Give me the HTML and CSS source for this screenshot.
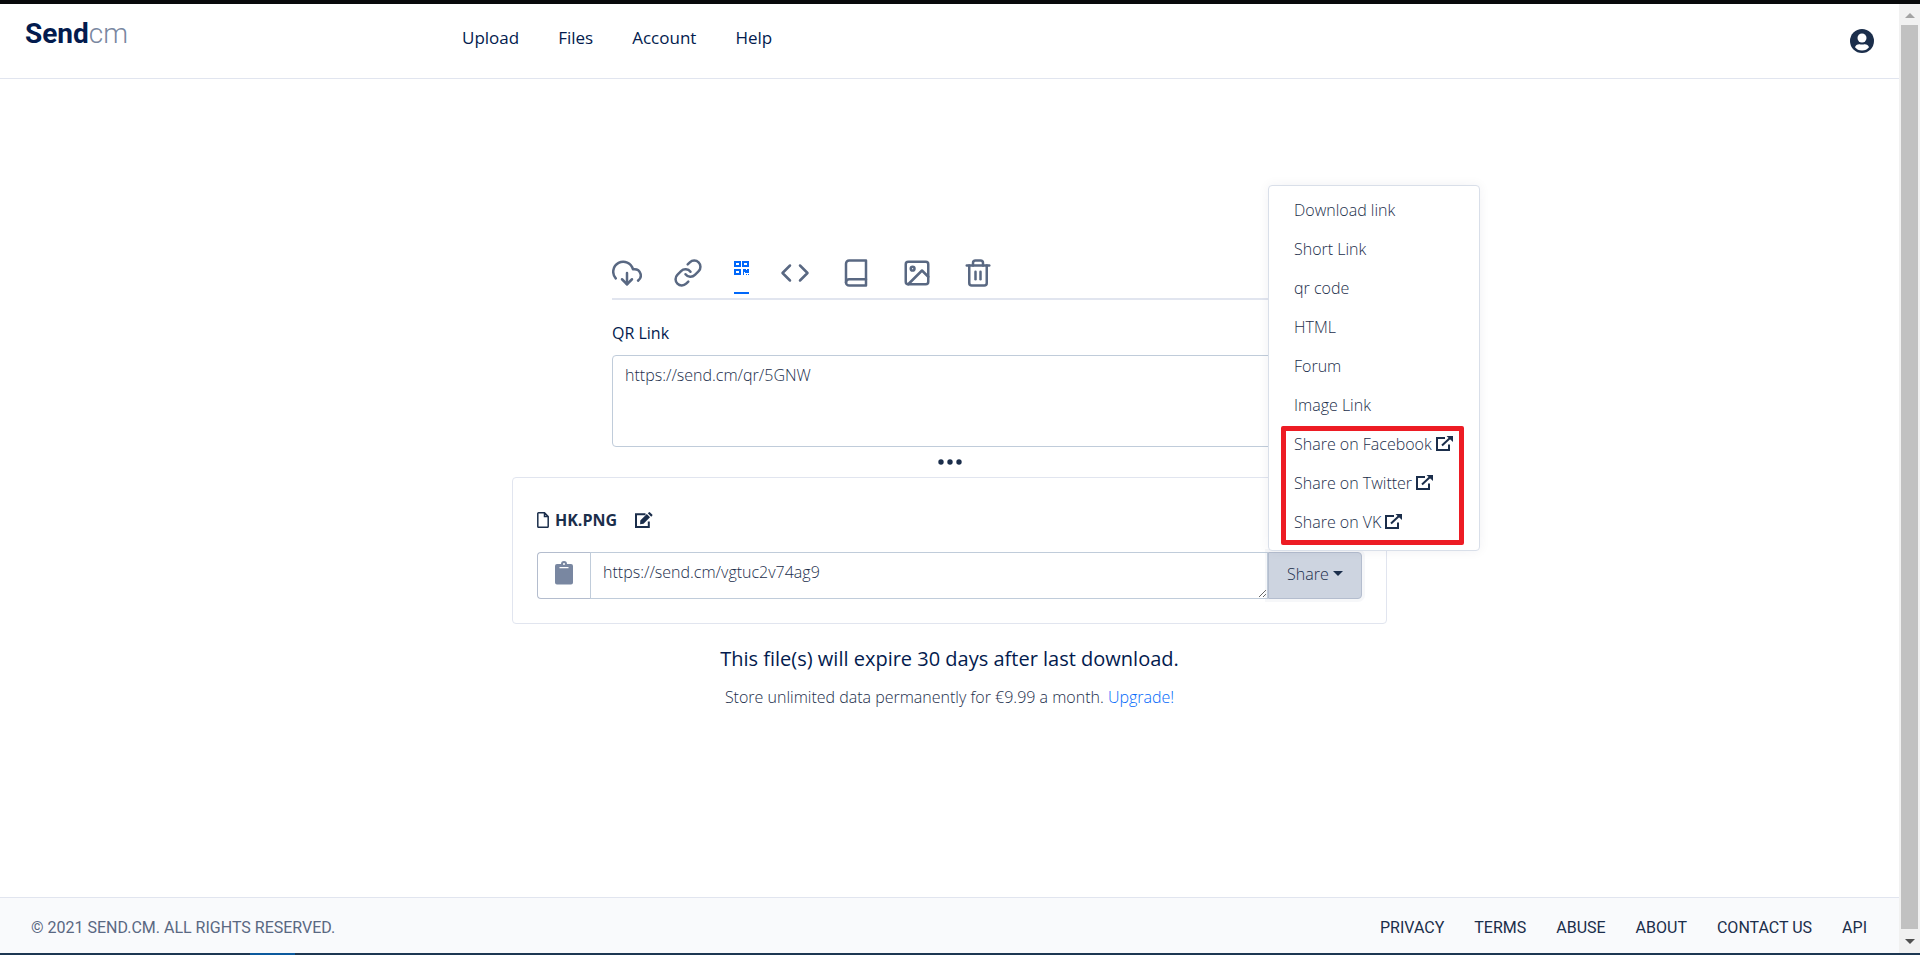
FILE: index.html
```
<!DOCTYPE html>
<html lang="en">
<head>
    <meta charset="UTF-8">
    <meta name="viewport" content="width=device-width, initial-scale=1.0">
    <title>Send.cm</title>
    <link rel="stylesheet" href="styles.css">
</head>
<body>
    <div class="window-top"></div>
    <div class="window">
        <div class="page">
            <header class="header">
                <a class="logo" href="#"><b>Send</b><span>cm</span></a>
                <nav class="nav">
                    <a href="#">Upload</a>
                    <a href="#">Files</a>
                    <a href="#">Account</a>
                    <a href="#">Help</a>
                </nav>
                <button type="button" class="user-btn" aria-label="Profile">
                    <svg viewBox="0 0 24 24" width="24" height="24">
                        <circle cx="12" cy="12" r="12" fill="#1b2e4b"/>
                        <circle cx="12" cy="9" r="4.5" fill="#fff"/>
                        <path d="M5 18.2c.5-2 2.200-3 4.200-3 .9 0 1.600.4 2.800.4s1.900-.4 2.800-.4c2 0 3.700 1 4.200 3-1.500 2-4 3.300-7 3.300s-5.500-1.300-7-3.300z" fill="#fff"/>
                    </svg>
                </button>
            </header>

            <main class="main">
                <section class="links">
                    <div class="tabs">
                        <button type="button" class="tab" aria-label="Download link">
                            <svg class="icon" viewBox="0 0 24 24"><polyline points="8 17 12 21 16 17"/><line x1="12" y1="12" x2="12" y2="21"/><path d="M20.880 18.090A5 5 0 0 0 18 9h-1.260A8 8 0 1 0 3 16.290"/></svg>
                        </button>
                        <button type="button" class="tab" aria-label="Short link">
                            <svg class="icon" viewBox="0 0 24 24"><path d="M10 13a5 5 0 0 0 7.540.540l3-3a5 5 0 0 0-7.070-7.070l-1.720 1.710"/><path d="M14 11a5 5 0 0 0-7.540-.540l-3 3a5 5 0 0 0 7.070 7.070l1.710-1.710"/></svg>
                        </button>
                        <button type="button" class="tab active" aria-label="QR code">
                            <svg class="qr" viewBox="0 0 15 14"><path fill-rule="evenodd" d="M0 0h7v6H0zM2 2v2h3V2zM8 0h7v6H8zM10 2v2h3V2zM0 8h7v6H0zM2 10v2h3v-2zM9 8h3v1h1V8h2v4h-4v-1h-1v3H9zM12 13h1v1h-1zM14 13h1v1h-1z"/></svg>
                        </button>
                        <button type="button" class="tab" aria-label="HTML">
                            <svg class="icon" viewBox="0 0 24 24"><polyline points="16 18 22 12 16 6"/><polyline points="8 6 2 12 8 18"/></svg>
                        </button>
                        <button type="button" class="tab" aria-label="Forum">
                            <svg class="icon" viewBox="0 0 24 24"><path d="M4 19.500A2.500 2.500 0 0 1 6.500 17H20"/><path d="M6.500 2H20v20H6.500A2.500 2.500 0 0 1 4 19.500v-15A2.500 2.500 0 0 1 6.500 2z"/></svg>
                        </button>
                        <button type="button" class="tab" aria-label="Image link">
                            <svg class="icon" viewBox="0 0 24 24"><rect x="3" y="3" width="18" height="18" rx="2"/><circle cx="8.500" cy="8.500" r="1.500"/><polyline points="21 15 16 10 5 21"/></svg>
                        </button>
                        <button type="button" class="tab" aria-label="Delete">
                            <svg class="icon" viewBox="0 0 24 24"><polyline points="3 6 5 6 21 6"/><path d="M19 6v14a2 2 0 0 1-2 2H7a2 2 0 0 1-2-2V6m3 0V4a2 2 0 0 1 2-2h4a2 2 0 0 1 2 2v2"/><line x1="10" y1="11" x2="10" y2="17"/><line x1="14" y1="11" x2="14" y2="17"/></svg>
                        </button>
                    </div>
                    <label class="link-label" for="qr-link">QR Link</label>
                    <textarea class="link-box" id="qr-link" spellcheck="false">https://send.cm/qr/5GNW</textarea>
                </section>

                <button type="button" class="more-btn" aria-label="More">
                    <svg viewBox="0 0 24 6" width="24" height="6"><circle cx="3" cy="3" r="2.700"/><circle cx="12" cy="3" r="2.700"/><circle cx="21" cy="3" r="2.700"/></svg>
                </button>

                <section class="card">
                    <div class="file-row">
                        <svg class="file-icon" viewBox="0 0 12 16"><path d="M1.500.8h6L11.200 4.500v10a.8.8 0 0 1-.8.8H1.600a.8.8 0 0 1-.8-.8v-13a.7.7 0 0 1 .7-.7zM7.500.8v3.700h3.700"/></svg>
                        <h1 class="file-name">HK.PNG</h1>
                        <button type="button" class="edit-btn" aria-label="Rename">
                            <svg viewBox="0 0 18 16" width="18" height="16"><path d="M10.500 2.200H1v12.800h12.800V9.500" fill="none" stroke="#1b2e4b" stroke-width="2"/><path d="M5.300 8.600 11.800 2l3.200 3.200-6.500 6.600-3.400.4zM12.800 1.200 13.700.4q.7-.7 1.400 0l2.100 2q.6.700 0 1.300l-1 1z" fill="#1b2e4b"/></svg>
                        </button>
                    </div>
                    <div class="input-group">
                        <button type="button" class="copy-btn" aria-label="Copy">
                            <svg viewBox="0 0 18 24" width="18" height="24"><path fill-rule="evenodd" d="M2 3h4a3 3 0 0 1 6 0h4a2 2 0 0 1 2 2v16.500a2 2 0 0 1-2 2H2a2 2 0 0 1-2-2V5a2 2 0 0 1 2-2zM9 2a1 1 0 1 0 0 2 1 1 0 0 0 0-2zM4.500 6v1.200h9V6z" fill="#7987a1"/></svg>
                        </button>
                        <textarea class="file-link" rows="1" aria-label="File link" spellcheck="false">https://send.cm/vgtuc2v74ag9</textarea>
                        <div class="dropdown">
                            <button type="button" class="share-btn">Share <span class="caret"></span></button>
                            <div class="menu">
                                <a href="#">Download link</a>
                                <a href="#">Short Link</a>
                                <a href="#">qr code</a>
                                <a href="#">HTML</a>
                                <a href="#">Forum</a>
                                <a href="#">Image Link</a>
                                <div class="social">
                                    <a href="#">Share on Facebook <svg class="ext" viewBox="0 0 17 15"><path d="M9 2H1v12h12V8.500M6 9.500 14 2"/><path class="tip" d="M10.500 0H17v6z"/></svg></a>
                                    <a href="#">Share on Twitter <svg class="ext" viewBox="0 0 17 15"><path d="M9 2H1v12h12V8.500M6 9.500 14 2"/><path class="tip" d="M10.500 0H17v6z"/></svg></a>
                                    <a href="#">Share on VK <svg class="ext" viewBox="0 0 17 15"><path d="M9 2H1v12h12V8.500M6 9.500 14 2"/><path class="tip" d="M10.500 0H17v6z"/></svg></a>
                                </div>
                            </div>
                        </div>
                    </div>
                </section>

                <h2 class="expire">This file(s) will expire 30 days after last download.</h2>
                <p class="upgrade">Store unlimited data permanently for €9.99 a month. <a href="#">Upgrade!</a></p>
            </main>

            <footer class="footer">
                <span>© 2021 SEND.CM. ALL RIGHTS RESERVED.</span>
                <nav class="footer-nav">
                    <a href="#">PRIVACY</a>
                    <a href="#">TERMS</a>
                    <a href="#">ABUSE</a>
                    <a href="#">ABOUT</a>
                    <a href="#">CONTACT US</a>
                    <a href="#">API</a>
                </nav>
            </footer>
        </div>
        <div class="scrollbar">
            <span class="arrow-up"></span>
            <span class="thumb"></span>
            <span class="arrow-down"></span>
        </div>
    </div>
    <div class="taskbar"><span></span></div>
</body>
</html>
```
FILE: styles.css
```
* {
    box-sizing: border-box;
}

body {
    margin: 0;
    height: 100vh;
    display: flex;
    flex-direction: column;
    font-family: "Open Sans", "Noto Sans", sans-serif;
    font-size: 16px;
    font-weight: 300;
    color: #1b2e4b;
    background: #fff;
}

a {
    color: inherit;
    text-decoration: none;
}

button {
    padding: 0;
    border: none;
    background: none;
    font: inherit;
    color: inherit;
    cursor: pointer;
}

svg {
    display: block;
}

/* Window edges */
.window-top {
    height: 4px;
    background: #08090b;
}

.taskbar {
    height: 2px;
    padding-left: 250px;
    background: #1d3752;
}

.taskbar span {
    display: block;
    width: 45px;
    height: 2px;
    background: #0c5a9e;
}

.window {
    flex: 1;
    display: flex;
    min-height: 0;
}

.page {
    flex: 1;
    display: flex;
    flex-direction: column;
}

/* Scrollbar */
.scrollbar {
    width: 21px;
    display: flex;
    flex-direction: column;
    align-items: center;
    padding: 9px 2px;
    gap: 7px;
    background: #f1f1f1;
}

.thumb {
    flex: 1;
    width: 17px;
    background: #c1c1c1;
}

.arrow-up, .arrow-down {
    border: 5px solid transparent;
    border-top-width: 0;
    border-bottom: 5px solid #a3a3a3;
}

.arrow-down {
    border-bottom-width: 0;
    border-top: 5px solid #505050;
    margin: 3px 0 0;
}

/* Header */
.header {
    height: 75px;
    display: flex;
    align-items: flex-start;
    padding: 0 25px;
    border-bottom: 1px solid #e1e5ef;
}

.logo {
    width: 437px;
    margin-top: 12px;
    font-family: Roboto, sans-serif;
    font-size: 28px;
    line-height: 36px;
    color: #031b4e;
}

.logo b {
    font-weight: 700;
}

.logo span {
    color: #7987a1;
}

.nav {
    display: flex;
    gap: 39px;
    margin-top: 22px;
    font-size: 17px;
    line-height: 24px;
    font-weight: 500;
    color: #031b4e;
}

.user-btn {
    margin: 25px 0 0 auto;
}

/* Main */
.main {
    flex: 1;
    display: flex;
    flex-direction: column;
    align-items: center;
    padding-top: 179px;
}

.links {
    width: 675px;
    max-width: 100%;
}

.tabs {
    display: flex;
    gap: 31px;
    height: 42px;
    border-bottom: 2px solid #e1e5ef;
}

.tab {
    height: 36px;
    display: flex;
}

.tab.active {
    padding-top: 3px;
    border-bottom: 2px solid #0168fa;
}

.icon {
    width: 30px;
    height: 30px;
    fill: none;
    stroke: #596882;
    stroke-width: 2;
    stroke-linecap: round;
    stroke-linejoin: round;
}

.qr {
    width: 15px;
    height: 14px;
    fill: #0168fa;
}

.link-label {
    display: block;
    margin: 23px 0 12px;
    font-size: 16px;
    line-height: 20px;
    font-weight: 500;
    color: #031b4e;
}

.link-box, .file-link {
    display: block;
    width: 100%;
    margin: 0;
    padding: 8px 12px;
    border: 1px solid #c0ccda;
    font: inherit;
    line-height: 22px;
    color: #1b2e4b;
    outline: none;
}

.link-box {
    height: 92px;
    border-radius: 4px;
    resize: none;
}

.more-btn {
    height: 30px;
    display: flex;
    align-items: center;
    fill: #1b2e4b;
}

/* File card */
.card {
    width: 875px;
    max-width: 100%;
    padding: 24px;
    border: 1px solid #e1e5ef;
    border-radius: 4px;
}

.file-row {
    display: flex;
    align-items: center;
    height: 36px;
    margin-bottom: 14px;
}

.file-icon {
    width: 12px;
    height: 16px;
    margin-right: 6px;
    fill: none;
    stroke: #1b2e4b;
    stroke-width: 1.5;
}

.file-name {
    margin: 0;
    font-size: 16px;
    font-weight: 700;
}

.edit-btn {
    margin-left: 18px;
}

.input-group {
    display: flex;
    height: 47px;
}

.copy-btn {
    width: 53px;
    display: flex;
    justify-content: center;
    padding-top: 8px;
    border: 1px solid #b4bdce;
    border-right: none;
    border-radius: 4px 0 0 4px;
}

.file-link {
    flex: 1;
    height: 47px;
    resize: vertical;
}

.dropdown {
    position: relative;
}

.share-btn {
    width: 94px;
    height: 47px;
    padding-bottom: 3px;
    background: #cdd4e0;
    border: 1px solid #b4bdce;
    border-radius: 0 4px 4px 0;
    box-shadow: 0 0 0 3px rgba(192, 204, 218, 0.15);
}

.caret {
    display: inline-block;
    vertical-align: 4px;
    border: 5px solid transparent;
    border-top-color: #1b2e4b;
    border-bottom: none;
}

/* Share menu */
.menu {
    position: absolute;
    left: 0;
    bottom: 100%;
    margin-bottom: 1px;
    width: 212px;
    padding: 4px 12px 9px;
    background: #fff;
    border: 1px solid #d9dfe9;
    border-radius: 4px;
    box-shadow: 0 0 12px rgba(28, 39, 60, 0.06);
}

.menu a {
    display: flex;
    align-items: center;
    gap: 4px;
    height: 39px;
    padding-left: 13px;
    white-space: nowrap;
}

/* Frame around the social links */
.social {
    position: relative;
}

.social::after {
    content: "";
    position: absolute;
    top: 2px;
    bottom: -4px;
    left: 0;
    right: 3px;
    border: 5px solid #ed1c24;
    border-radius: 2px;
    pointer-events: none;
}

.ext {
    width: 17px;
    height: 15px;
    fill: none;
    stroke: #1b2e4b;
    stroke-width: 2;
}

.ext .tip {
    fill: #1b2e4b;
    stroke: none;
}

/* Expiry text */
.expire {
    margin: 20px 0 12px;
    font-size: 20px;
    line-height: 30px;
    font-weight: 500;
    color: #031b4e;
}

.upgrade {
    margin: 0;
    line-height: 22px;
}

.upgrade a {
    color: #0168fa;
}

/* Footer */
.footer {
    display: flex;
    justify-content: space-between;
    align-items: center;
    height: 56px;
    padding: 4px 32px 0 31px;
    background: #f9fafc;
    border-top: 1px solid #e1e5ef;
    font-family: Roboto, sans-serif;
    font-weight: 400;
    color: #596882;
}

.footer-nav {
    display: flex;
    gap: 30px;
    color: #1b2e4b;
}
```
